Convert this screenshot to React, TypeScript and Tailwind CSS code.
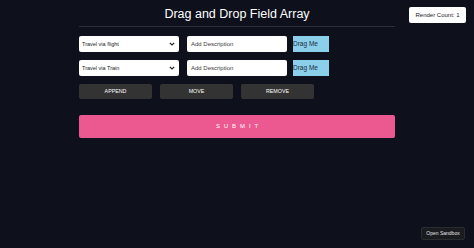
import React from 'react';

const font = { fontFamily: '"Liberation Sans", Arial, sans-serif' };

function Chevron() {
  return (
    <svg width="6" height="4" viewBox="0 0 6 4" className="absolute right-[4px] top-1/2 -translate-y-1/2">
      <path d="M0.8 0.8 L3 3 L5.2 0.8" fill="none" stroke="#222" strokeWidth="1.2" />
    </svg>
  );
}

function FieldRow({ label }: { label: string }) {
  return (
    <div className="flex items-center h-[16px]">
      <div className="relative w-[100px] h-[16px] bg-white rounded-[2px] flex items-center pl-[3px] text-[5.5px] text-[#222]">
        {label}
        <Chevron />
      </div>
      <input
        placeholder="Add Description"
        className="ml-[8px] w-[100px] h-[16px] bg-white rounded-[2px] px-[4px] text-[6px] text-[#222] placeholder:text-[#3a3a3a] outline-none"
      />
      <div className="ml-[6px] w-[36px] h-[16px] bg-[#8bcfea] flex items-center text-[6.5px] text-[#1c2b44]">
        Drag Me
      </div>
    </div>
  );
}

export default function App() {
  return (
    <div className="relative w-[474px] h-[248px] bg-[#0e101c] overflow-hidden" style={font}>
      <div className="w-[316px] mx-auto">
        <div className="h-[27px] flex items-center justify-center border-b border-[#2c2f3b]">
          <h1 className="text-[12.5px] leading-none text-white font-normal pt-[3px]">Drag and Drop Field Array</h1>
        </div>
        <div className="mt-[9px] flex flex-col gap-[8px]">
          <FieldRow label="Travel via flight" />
          <FieldRow label="Travel via Train" />
        </div>
        <div className="mt-[8px] flex gap-[8px]">
          {['APPEND', 'MOVE', 'REMOVE'].map((t) => (
            <button
              key={t}
              className="w-[73px] h-[15px] bg-[#333333] rounded-[2px] text-[5.3px] text-white flex items-center justify-center"
            >
              {t}
            </button>
          ))}
        </div>
        <button className="mt-[16px] w-full h-[23px] bg-[#ec5990] rounded-[2px] text-[6px] text-white tracking-[0.65em] flex items-center justify-center pl-[4px]">
          SUBMIT
        </button>
      </div>

      <div className="absolute right-[8px] top-[7px] w-[57px] h-[16px] bg-white rounded-[2px] flex items-center justify-center text-[6px] text-[#222]">
        Render Count: 1
      </div>

      <div className="absolute right-[9px] top-[227px] w-[44px] h-[13px] bg-[#1a1b1e] border border-[#2b2c30] rounded-[2px] flex items-center justify-center text-[5px] text-[#e4e4e4]">
        Open Sandbox
      </div>
    </div>
  );
}
